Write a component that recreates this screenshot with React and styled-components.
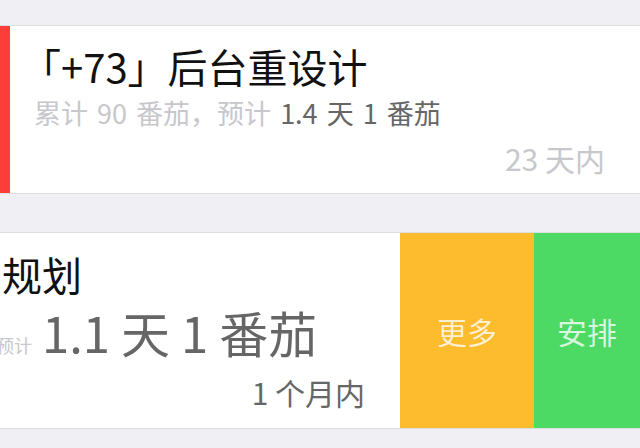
import React from 'react';
import styled, { createGlobalStyle } from 'styled-components';

const GlobalStyle = createGlobalStyle`
  html, body {
    margin: 0;
    padding: 0;
    background: #efeff4;
  }
  body {
    width: 640px;
    height: 448px;
    overflow: hidden;
    font-family: "Noto Sans CJK SC", sans-serif;
    -webkit-font-smoothing: antialiased;
  }
`;

const List = styled.div`
  display: flex;
  flex-direction: column;
  gap: 38px;
  padding-top: 25px;
`;

const Card = styled.div`
  display: flex;
  background: #fff;
  border-top: 1px solid #dededf;
  border-bottom: 1px solid #dededf;
  overflow: hidden;
`;

const Stripe = styled.div`
  width: 10px;
  flex-shrink: 0;
  background: ${p => p.color};
`;

const Body = styled.div`
  flex: 1;
  min-width: 0;
  display: flex;
  flex-direction: column;
  padding: ${p => p.pad};
  white-space: nowrap;
`;

const Title = styled.div`
  font-size: 40px;
  line-height: 46px;
  color: #111;
  margin-left: ${p => p.indent || 0}px;
`;

const Meta = styled.div`
  font-size: ${p => p.size}px;
  line-height: ${p => p.lh}px;
  margin-top: ${p => p.gap}px;
  word-spacing: ${p => p.ws || 0}px;
  color: #c7c7cc;
`;

const Strong = styled.span`
  color: #666;
`;

const Due = styled.div`
  align-self: flex-end;
  font-size: 30px;
  line-height: 36px;
  margin-top: ${p => p.gap}px;
  color: ${p => (p.dark ? '#666' : '#c7c7cc')};
`;

const Clipped = styled.span`
  display: inline-block;
  margin-left: -6px;
  margin-right: 10px;
  font-size: 18px;
  line-height: 18px;
`;

const Action = styled.div`
  flex-shrink: 0;
  width: ${p => p.w}px;
  display: flex;
  align-items: center;
  justify-content: center;
  background: ${p => p.bg};
  color: rgba(255, 255, 255, 0.78);
  font-size: 30px;
  margin: -1px 0;
`;

export default function App() {
  return (
    <>
      <GlobalStyle />
      <List>
        <Card>
          <Stripe color="#fc3d39" />
          <Body pad="17px 35px 17px 24px">
            <Title indent={-13}>「+73」后台重设计</Title>
            <Meta size={27} lh={32} gap={8} ws={3}>
              累计 90 番茄，预计 <Strong>1.4 天 1 番茄</Strong>
            </Meta>
            <Due gap={11}>23 天内</Due>
          </Body>
        </Card>

        <Card>
          <Body pad="18px 35px 18px 2px">
            <Title>规划</Title>
            <Meta size={49} lh={56} gap={7}>
              <Clipped>预计</Clipped>
              <Strong>1.1 天 1 番茄</Strong>
            </Meta>
            <Due gap={14} dark>1 个月内</Due>
          </Body>
          <Action w={134} bg="#fdbb2e">更多</Action>
          <Action w={106} bg="#4cd964">安排</Action>
        </Card>
      </List>
    </>
  );
}
